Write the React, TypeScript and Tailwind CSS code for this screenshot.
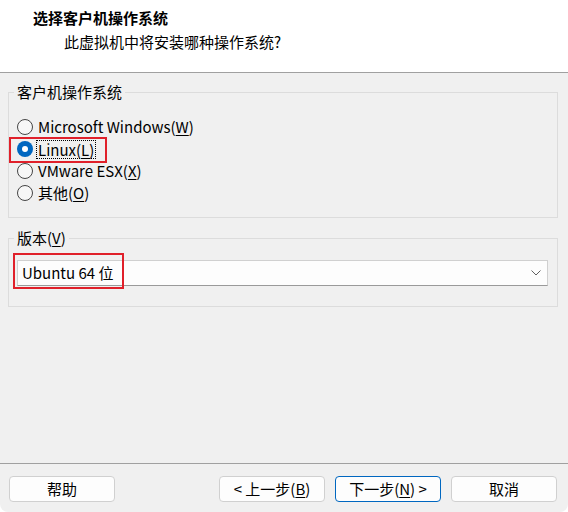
import React from "react";

const font = { fontFamily: '"Noto Sans CJK SC", "Noto Sans", sans-serif' };

function Radio({ checked }: { checked?: boolean }) {
  return checked ? (
    <span className="w-[16px] h-[16px] rounded-full bg-[#0067c0] flex items-center justify-center shrink-0">
      <span className="w-[6px] h-[6px] rounded-full bg-white" />
    </span>
  ) : (
    <span className="w-[16px] h-[16px] rounded-full border border-[#454545] bg-[#f7f7f7] shrink-0" />
  );
}

function Row({ children, checked, mark }: { children: React.ReactNode; checked?: boolean; mark?: boolean }) {
  return (
    <div className="relative h-[22px] flex items-center gap-[5px]">
      <Radio checked={checked} />
      {children}
      {mark && (
        <span className="absolute left-[-8px] top-[-1px] w-[98px] h-[26px] border-2 border-[#e0202a]" />
      )}
    </div>
  );
}

function Btn({ children, primary }: { children: React.ReactNode; primary?: boolean }) {
  return (
    <button
      className={
        primary
          ? "w-[106px] h-[26px] rounded-[4px] bg-[#fdfdfd] border border-[#0067c0] text-[15px] leading-[20px] text-black flex items-center justify-center"
          : "w-[106px] h-[26px] rounded-[4px] bg-[#fdfdfd] border border-[#d0d0d0] text-[15px] leading-[20px] text-black flex items-center justify-center"
      }
    >
      {children}
    </button>
  );
}

export default function App() {
  return (
    <div style={font} className="w-[568px] h-[512px] bg-[#f0f0f0] flex flex-col text-[15px] leading-[20px] text-black overflow-hidden rounded-b-[8px]">
      <div className="h-[73px] bg-white border-b border-[#a0a0a0] shrink-0 pt-[8px]">
        <div className="pl-[33px] font-bold leading-[20px]">选择客户机操作系统</div>
        <div className="pl-[64px] mt-[4px] leading-[20px]">此虚拟机中将安装哪种操作系统?</div>
      </div>

      <fieldset className="ml-[8px] mr-[10px] mt-[9px] border border-[#dcdcdc] pl-[8px] pt-[14px] pb-[13px]">
        <legend className="px-[3px] -ml-[3px] leading-[20px]">客户机操作系统</legend>
        <Row>
          <span>Microsoft Windows(<span className="underline underline-offset-2">W</span>)</span>
        </Row>
        <Row checked mark>
          <span className="border border-dotted border-black px-[1px] -ml-[2px] leading-[17px]">
            Linux(<span className="underline underline-offset-2">L</span>)
          </span>
        </Row>
        <Row>
          <span>VMware ESX(<span className="underline underline-offset-2">X</span>)</span>
        </Row>
        <Row>
          <span>其他(<span className="underline underline-offset-2">O</span>)</span>
        </Row>
      </fieldset>

      <fieldset className="ml-[8px] mr-[10px] mt-[10px] border border-[#dcdcdc] pl-[8px] pr-[9px] pt-[12px] pb-[20px]">
        <legend className="px-[3px] -ml-[3px] leading-[20px]">
          版本(<span className="underline underline-offset-2">V</span>)
        </legend>
        <div className="relative h-[26px] bg-[#fdfdfd] border border-[#d0d0d0] border-b-[#9a9a9a] flex items-center pl-[4px] pr-[6px]">
          <span className="flex-1">Ubuntu 64 位</span>
          <svg width="10" height="6" viewBox="0 0 10 6" className="text-[#606060]">
            <path d="M0.5 0.5 L5 5 L9.5 0.5" fill="none" stroke="currentColor" strokeWidth="1" />
          </svg>
          <span className="absolute left-[-5px] top-[-8px] w-[111px] h-[36px] border-2 border-[#e0202a]" />
        </div>
      </fieldset>

      <div className="flex-1" />

      <div className="h-[49px] border-t border-[#a0a0a0] shrink-0 flex items-start pt-[12px] pl-[9px] pr-[11px]">
        <Btn>帮助</Btn>
        <div className="flex-1" />
        <div className="flex gap-[10px]">
          <Btn>&lt; 上一步(<span className="underline underline-offset-2">B</span>)</Btn>
          <Btn primary>下一步(<span className="underline underline-offset-2">N</span>) &gt;</Btn>
          <Btn>取消</Btn>
        </div>
      </div>
    </div>
  );
}
